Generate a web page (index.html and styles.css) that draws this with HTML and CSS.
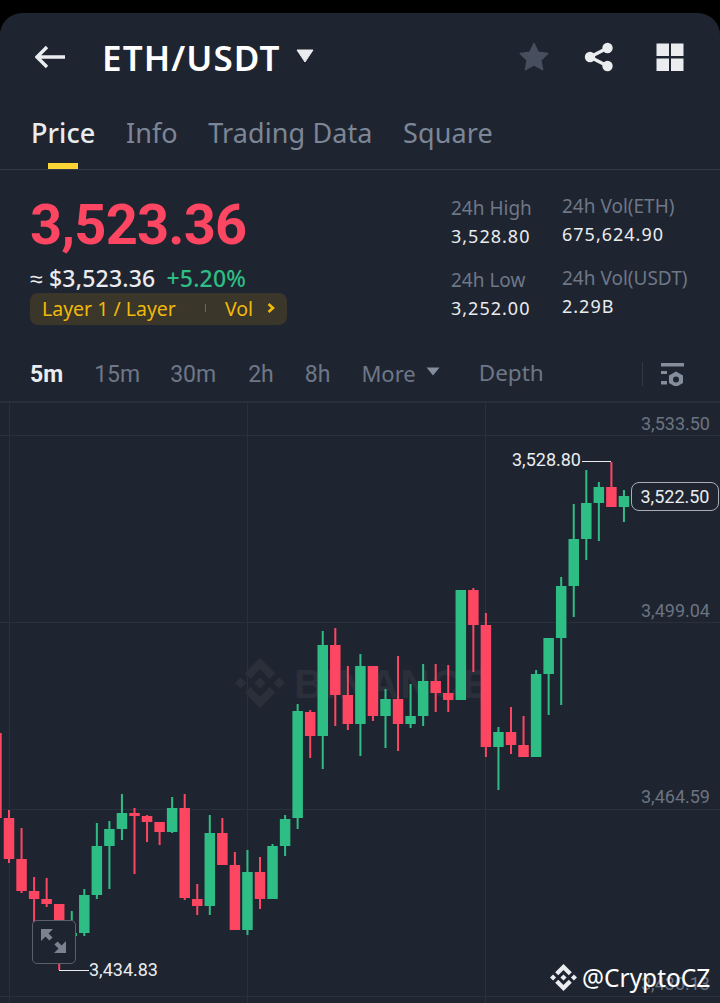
FILE: index.html
```html
<!DOCTYPE html>
<html lang="en">
<head>
  <meta charset="UTF-8">
  <title>ETH/USDT</title>
  <link rel="stylesheet" href="styles.css">
</head>
<body>
  <div class="screen">
    <!-- Top bar -->
    <header class="topbar">
      <svg class="back-icon" viewBox="0 0 30 24" width="30" height="24">
        <path d="M2 12H30M12 2L2 12L12 22" fill="none" stroke="#eaecef" stroke-width="3.4" />
      </svg>
      <h1 class="pair">ETH/USDT</h1>
      <svg class="pair-caret" viewBox="0 0 18 14" width="18" height="14">
        <path d="M1 1H17L9 13z" fill="#eaecef" stroke="#eaecef" stroke-linejoin="round" />
      </svg>
      <div class="topbar-actions">
        <svg viewBox="0 0 30 30" width="30" height="30">
          <path d="M15 1.5L19.2 10.3L28.8 11.5L21.8 18.1L23.6 27.6L15 22.9L6.4 27.6L8.2 18.1L1.2 11.5L10.8 10.3z" fill="#474f5f" stroke="#474f5f" stroke-width="1.5" stroke-linejoin="round" />
        </svg>
        <svg class="share-icon" viewBox="0 0 30 30" width="30" height="30">
          <path d="M6 15L23.5 6M6 15L23.5 24" stroke="#eaecef" stroke-width="3.4" fill="none" />
          <circle cx="6" cy="15" r="5.2" fill="#eaecef" />
          <circle cx="23.5" cy="6" r="5.2" fill="#eaecef" />
          <circle cx="23.5" cy="24" r="5.2" fill="#eaecef" />
        </svg>
        <svg viewBox="0 0 28 28" width="28" height="28">
          <rect x="0.5" y="0.5" width="12.5" height="12.5" fill="#eaecef" />
          <rect x="15" y="0.5" width="12.5" height="12.5" fill="#eaecef" />
          <rect x="0.5" y="15.5" width="12.5" height="12.5" fill="#eaecef" />
          <rect x="15" y="15.5" width="12.5" height="12.5" fill="#eaecef" />
        </svg>
      </div>
    </header>

    <!-- Tabs -->
    <nav class="tabs">
      <a class="tab active">Price</a>
      <a class="tab">Info</a>
      <a class="tab">Trading Data</a>
      <a class="tab">Square</a>
    </nav>

    <!-- Price summary -->
    <section class="summary">
      <div class="summary-main">
        <div class="last-price">3,523.36</div>
        <div class="fiat-row">
          <span class="fiat">≈ $3,523.36</span>
          <span class="change">+5.20%</span>
        </div>
        <div class="tag">
          <span class="tag-name">Layer 1 / Layer</span>
          <span class="tag-sep"></span>
          <span class="tag-vol">Vol</span>
          <svg class="tag-chevron" viewBox="0 0 8 10" width="8" height="10">
            <path d="M1.5 1L6 5L1.5 9" fill="none" stroke="#f0b90b" stroke-width="2.6" />
          </svg>
        </div>
      </div>
      <div class="stats">
        <div class="stat-col">
          <div class="stat">
            <div class="stat-label">24h High</div>
            <div class="stat-value">3,528.80</div>
          </div>
          <div class="stat">
            <div class="stat-label">24h Low</div>
            <div class="stat-value">3,252.00</div>
          </div>
        </div>
        <div class="stat-col stat-col-right">
          <div class="stat">
            <div class="stat-label">24h Vol(ETH)</div>
            <div class="stat-value">675,624.90</div>
          </div>
          <div class="stat">
            <div class="stat-label">24h Vol(USDT)</div>
            <div class="stat-value">2.29B</div>
          </div>
        </div>
      </div>
    </section>

    <!-- Intervals -->
    <div class="intervals">
      <span class="interval active">5m</span>
      <span class="interval i15">15m</span>
      <span class="interval i30">30m</span>
      <span class="interval i2h">2h</span>
      <span class="interval i8h">8h</span>
      <span class="interval-more">More</span>
      <svg class="more-caret" viewBox="0 0 14 9" width="14" height="9">
        <path d="M0.5 0.5H13.5L7 8.5z" fill="#848e9c" />
      </svg>
      <span class="interval depth">Depth</span>
      <span class="interval-sep"></span>
      <svg class="chart-settings" viewBox="0 0 24 24" width="24" height="24">
        <path d="M1 1H24V4.5H1zM1 9H7V12H1zM1 19H7V22.500H1z" fill="#848e9c" />
        <path fill-rule="evenodd" d="M16 9.500L23 13.500V21L16 25L9 21V13.500zM16 14.400A3 3 0 1 0 16 20.400A3 3 0 1 0 16 14.400z" fill="#848e9c" />
      </svg>
    </div>

    <!-- Chart -->
    <div class="chart">
      <svg id="chart-svg" class="chart-svg" viewBox="0 403 720 600" width="720" height="600">
        <g class="grid">
          <line x1="0" y1="435.500" x2="720" y2="435.500" />
          <line x1="0" y1="622.500" x2="720" y2="622.500" />
          <line x1="0" y1="809.500" x2="720" y2="809.500" />
          <line x1="0" y1="996.500" x2="720" y2="996.500" />
          <line x1="9.500" y1="403" x2="9.500" y2="1003" />
          <line x1="247.500" y1="403" x2="247.500" y2="1003" />
          <line x1="485.500" y1="403" x2="485.500" y2="1003" />
        </g>
        <!-- watermark -->
        <g class="watermark">
          <g transform="translate(235 658) scale(2.08)">
            <path d="M7.34 10.08L12 5.42L16.66 10.08L19.37 7.37L12 0L4.630 7.370zM7.34 13.92L12 18.58L16.66 13.92L19.37 16.63L12 24L4.630 16.630zM0 12L2.710 9.290L5.420 12L2.710 14.710zM18.58 12L21.290 9.290L24 12L21.290 14.710zM14.750 12L12 9.250L9.250 12L12 14.750z" />
          </g>
          <text class="watermark-text" x="294" y="698">BINANCE</text>
        </g>
        <g id="candles"></g>
        <!-- axis -->
        <text class="axis-label" x="710" y="429.500">3,533.50</text>
        <text class="axis-label" x="710" y="616.500">3,499.04</text>
        <text class="axis-label" x="710" y="803">3,464.59</text>
        <text class="axis-label" x="710" y="990">3,430.13</text>
        <!-- high / low marks -->
        <path class="mark-line" d="M582 461.500H611" />
        <text class="mark-label" x="581" y="465.500">3,528.80</text>
        <path class="mark-line" d="M59 970.500H89" />
        <text class="mark-label" x="158" y="976">3,434.83</text>
      </svg>
      <div class="last-tag">3,522.50</div>
      <div class="expand-btn">
        <svg viewBox="0 0 44 43" width="44" height="43">
          <path d="M9 9H21L9 21zM34 33H22L34 21z" fill="#7b8290" />
          <path d="M13 13L19 19M30 29L24 23" stroke="#7b8290" stroke-width="4.500" />
        </svg>
      </div>
      <div class="credit">
        <svg viewBox="0 0 24 24" width="27" height="27">
          <path d="M7.34 10.08L12 5.42L16.66 10.08L19.37 7.37L12 0L4.630 7.370zM7.34 13.92L12 18.58L16.66 13.92L19.37 16.63L12 24L4.630 16.630zM0 12L2.710 9.290L5.420 12L2.710 14.710zM18.58 12L21.290 9.290L24 12L21.290 14.710zM14.750 12L12 9.250L9.250 12L12 14.750z" fill="#eaecef" />
        </svg>
        <span>@CryptoCZ</span>
      </div>
    </div>
  </div>

  <script src="chart.js"></script>
</body>
</html>
```

FILE: styles.css
```css
html, body {
  margin: 0;
  padding: 0;
  background: #000;
}
body {
  width: 720px;
  height: 1003px;
  overflow: hidden;
  font-family: "Noto Sans", Arial, sans-serif;
}
.screen {
  margin-top: 13px;
  height: 990px;
  background: #1f2530;
  border-radius: 22px 22px 0 0;
  display: flex;
  flex-direction: column;
  color: #eaecef;
}

/* top bar */
.topbar {
  display: flex;
  align-items: center;
  height: 90px;
  padding: 0 36px 2px 35px;
  box-sizing: border-box;
}
.pair {
  margin: 0 0 0 37px;
  font-size: 35px;
  font-weight: 600;
  color: #fff;
  letter-spacing: 1.1px;
}
.pair-caret {
  margin-left: 15px;
  margin-top: -3px;
}
.topbar-actions {
  margin-left: auto;
  display: flex;
  align-items: center;
  gap: 35px;
}
.share-icon {
  margin-right: 7px;
}

/* tabs */
.tabs {
  display: flex;
  gap: 30.5px;
  height: 66px;
  padding-left: 31px;
  border-bottom: 1px solid #333944;
}
.tab {
  position: relative;
  font-size: 27px;
  letter-spacing: 0.1px;
  line-height: 60px;
  color: #7d8696;
}
.tab.active {
  color: #eaecef;
  font-weight: 500;
}
.tab.active::after {
  content: "";
  position: absolute;
  left: 17px;
  bottom: 0;
  width: 30px;
  height: 6px;
  background: #fcd535;
}

/* summary */
.summary {
  display: flex;
  height: 175px;
  padding-left: 30px;
}
.summary-main {
  width: 421px;
}
.last-price {
  font-family: Roboto, sans-serif;
  font-size: 56px;
  font-weight: 700;
  letter-spacing: -0.8px;
  line-height: 54px;
  margin-top: 28px;
  color: #fd4662;
}
.fiat-row {
  display: flex;
  gap: 11px;
  margin-top: 12px;
  font-size: 23px;
  letter-spacing: 0.2px;
  line-height: 28px;
  font-weight: 500;
}
.change {
  color: #2ebd85;
}
.tag {
  display: flex;
  align-items: center;
  width: 257px;
  height: 32px;
  margin-top: 1px;
  box-sizing: border-box;
  padding: 0 0 2px 12px;
  background: #3a3629;
  border-radius: 8px;
  color: #f0b90b;
  font-size: 19.5px;
}
.tag-name {
  width: 163px;
}
.tag-sep {
  width: 1px;
  height: 8px;
  background: #7d6a20;
}
.tag-vol {
  margin-left: 19px;
}
.tag-chevron {
  margin-left: 14px;
}
.stats {
  display: flex;
}
.stat-col {
  width: 111px;
  padding-top: 24px;
}
.stat-col-right {
  padding-top: 22px;
}
.stat {
  margin-bottom: 16px;
}
.stat-label {
  font-size: 19px;
  line-height: 28px;
  color: #6e7787;
  white-space: nowrap;
}
.stat-value {
  font-size: 18px;
  line-height: 28px;
  color: #eaecef;
  letter-spacing: 1px;
  white-space: nowrap;
}

/* intervals */
.intervals {
  position: relative;
  display: flex;
  align-items: center;
  height: 54px;
  padding: 2px 0 0 30px;
  border-bottom: 2px solid #2a303b;
  font-family: Roboto, sans-serif;
  font-size: 23px;
  color: #6e7787;
}
.interval.active {
  color: #eaecef;
  font-weight: 700;
}
.i15 { margin-left: 31px; }
.i30 { margin-left: 30px; }
.i2h { margin-left: 32px; }
.i8h { margin-left: 31px; }
.interval-more {
  margin-left: 31px;
  font-family: "Noto Sans", sans-serif;
  font-size: 22px;
  margin-top: -3px;
}
.more-caret {
  margin-left: 10px;
  margin-top: -6px;
}
.depth {
  margin-left: 39px;
  font-family: "Noto Sans", sans-serif;
  font-size: 22.5px;
  margin-top: -3px;
}
.interval-sep {
  margin-left: auto;
  width: 1px;
  height: 24px;
  background: #333944;
}
.chart-settings {
  margin: 0 36px 0 17px;
}

/* chart */
.chart {
  position: relative;
  flex: 1;
  overflow: hidden;
}
.chart-svg {
  display: block;
}
.grid line {
  stroke: #2b313c;
  stroke-width: 1;
}
.watermark path {
  fill: #2a2f3a;
}
.watermark-text {
  font-family: "Liberation Sans", sans-serif;
  font-size: 41px;
  font-weight: 700;
  letter-spacing: 1.500px;
  fill: #2a2f3a;
}
.axis-label {
  font-family: Roboto, sans-serif;
  font-size: 18px;
  fill: #6c7380;
  text-anchor: end;
}
.mark-label {
  font-family: Roboto, sans-serif;
  font-size: 18px;
  fill: #eaecef;
  text-anchor: end;
}
.mark-line {
  stroke: #eaecef;
  stroke-width: 1;
  fill: none;
}
.last-tag {
  position: absolute;
  left: 631px;
  top: 79px;
  width: 88px;
  height: 29px;
  box-sizing: border-box;
  border: 1px solid #a9aeb6;
  border-radius: 8px;
  background: #1f2530;
  font-family: Roboto, sans-serif;
  font-size: 18px;
  line-height: 27px;
  text-align: center;
  color: #eaecef;
}
.expand-btn {
  position: absolute;
  left: 32px;
  top: 517px;
  width: 44px;
  height: 44px;
  box-sizing: border-box;
  border: 1px solid #5a606c;
  border-radius: 5px;
  background: #1f2530;
}
.expand-btn svg {
  display: block;
  margin: -1px;
}
.credit {
  position: absolute;
  left: 550px;
  top: 558px;
  display: flex;
  align-items: center;
  gap: 5px;
  font-size: 24.5px;
  color: #fff;
}
```

FILE: chart.js
```js
// candles: colour, wick top, body top, body bottom, wick bottom (page y)
var UP = "#2ebd85";
var DOWN = "#fd4662";
var candles = [
  [DOWN, 733, 733, 818, 818],
  [DOWN, 810, 818, 859, 863],
  [DOWN, 828, 859, 891, 893],
  [DOWN, 877, 891, 899, 925],
  [DOWN, 878, 899, 904, 907],
  [DOWN, 904, 904, 932, 970],
  [UP, 911, 933, 936, 936],
  [UP, 889, 895, 933, 936],
  [UP, 823, 846, 895, 899],
  [UP, 821, 829, 846, 889],
  [UP, 794, 813, 829, 840],
  [DOWN, 808, 813, 816, 874],
  [DOWN, 815, 816, 822, 842],
  [DOWN, 822, 822, 832, 845],
  [UP, 797, 808, 832, 833],
  [DOWN, 794, 808, 898, 900],
  [DOWN, 884, 899, 906, 915],
  [UP, 815, 833, 906, 915],
  [DOWN, 818, 833, 865, 865],
  [DOWN, 852, 865, 930, 930],
  [UP, 850, 872, 930, 935],
  [DOWN, 857, 872, 899, 909],
  [UP, 844, 846, 899, 899],
  [UP, 815, 819, 846, 856],
  [UP, 704, 711, 818, 829],
  [DOWN, 710, 712, 736, 758],
  [UP, 631, 645, 736, 769],
  [DOWN, 628, 645, 695, 726],
  [DOWN, 666, 695, 724, 730],
  [UP, 654, 666, 724, 756],
  [DOWN, 666, 666, 716, 721],
  [UP, 689, 699, 716, 748],
  [DOWN, 656, 699, 724, 751],
  [UP, 684, 716, 724, 728],
  [UP, 664, 681, 716, 726],
  [DOWN, 664, 681, 693, 712],
  [DOWN, 665, 693, 700, 712],
  [UP, 590, 590, 700, 700],
  [DOWN, 588, 590, 625, 672],
  [DOWN, 613, 625, 747, 757],
  [UP, 727, 732, 747, 790],
  [DOWN, 707, 732, 745, 754],
  [DOWN, 716, 745, 757, 757],
  [UP, 670, 674, 757, 757],
  [UP, 638, 638, 674, 715],
  [UP, 577, 586, 638, 705],
  [UP, 504, 539, 586, 617],
  [UP, 470, 503, 539, 560],
  [UP, 482, 487, 503, 541],
  [DOWN, 462, 487, 507, 507],
  [UP, 490, 496, 507, 522]
];

var NS = "http://www.w3.org/2000/svg";
var group = document.getElementById("candles");

function addRect(x, y, w, h, fill) {
  var r = document.createElementNS(NS, "rect");
  r.setAttribute("x", x);
  r.setAttribute("y", y);
  r.setAttribute("width", w);
  r.setAttribute("height", h);
  r.setAttribute("fill", fill);
  group.appendChild(r);
}

candles.forEach(function (c, i) {
  var x = -3.55 + 12.55 * i;
  addRect(x - 1, c[1], 2, c[4] - c[1], c[0]);
  addRect(x - 5.25, c[2], 10.5, c[3] - c[2], c[0]);
});
```
